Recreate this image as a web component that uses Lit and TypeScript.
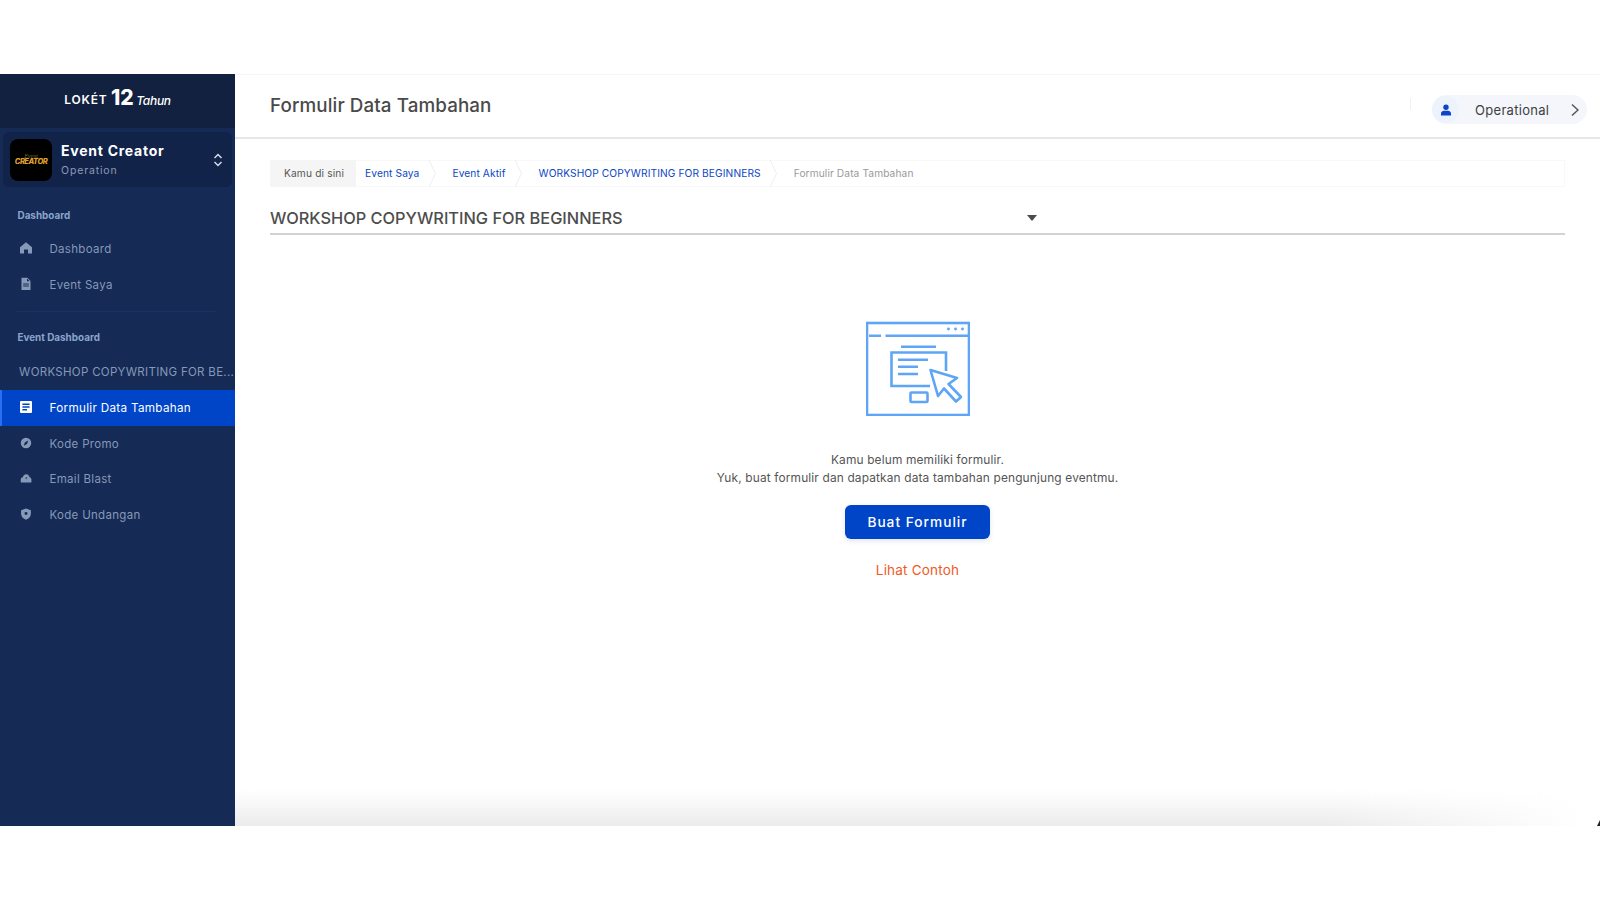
import { LitElement, html, css } from 'lit';
import { customElement } from 'lit/decorators.js';

const icons = {
  home: html`<svg viewBox="0 0 14 14"><path d="M7 1.2 13 6.2V12.6H9V8.6H5V12.6H1V6.2Z" fill="currentColor"/></svg>`,
  doc: html`<svg viewBox="0 0 14 14"><path fill-rule="evenodd" d="M2.5 .8H8.4L11.5 3.9V13H2.5ZM4.2 6.4V7.4H9.8V6.4ZM4.2 8.6V9.6H9.8V8.6ZM8 1.6V4.3H10.7Z" fill="currentColor"/></svg>`,
  form: html`<svg viewBox="0 0 14 14"><path fill-rule="evenodd" d="M2 1H12A1 1 0 0 1 13 2V12A1 1 0 0 1 12 13H2A1 1 0 0 1 1 12V2A1 1 0 0 1 2 1ZM3.4 3.6V5H10.6V3.6ZM3.4 6.3V7.7H10.6V6.3ZM3.4 9V10.4H8V9Z" fill="currentColor"/></svg>`,
  promo: html`<svg viewBox="-1 -1 16 16"><path fill-rule="evenodd" d="M7 1A6 6 0 1 1 7 13 6 6 0 0 1 7 1ZM9.6 4 5.8 6 4.4 10 8.2 8Z" fill="currentColor"/></svg>`,
  blast: html`<svg viewBox="-1 -1 16 16"><path d="M1 12V8.6C1 7.2 2.4 6.2 3.4 6.2 3.8 4 5.6 2.8 7.3 2.8 9.4 2.8 10.8 4.4 11 6.1 12.3 6.3 13.2 7.4 13.2 8.6V12ZM6.2 7 7.2 8.4 8.6 5.6Z" fill="currentColor"/></svg>`,
  shield: html`<svg viewBox="-1 -1 16 16"><path fill-rule="evenodd" d="M7 .6 12.6 2.6V6.6C12.6 9.8 10.2 12.4 7 13.6 3.8 12.4 1.4 9.8 1.4 6.6V2.6ZM7 4.8A1.7 1.7 0 1 0 7 8.2 1.7 1.7 0 0 0 7 4.8Z" fill="currentColor"/></svg>`,
};

@customElement('app-root')
export class AppRoot extends LitElement {
  static styles = css`
    :host {
      display: block;
      height: 900px;
      padding-top: 74px;
      box-sizing: border-box;
      background: #fff;
      font-family: Inter, "Noto Sans", sans-serif;
      overflow: hidden;
    }
    .frame {
      display: flex;
      height: 752px;
      position: relative;
    }

    /* sidebar */
    .side {
      width: 235px;
      flex: none;
      background: #152a55;
      color: #8599b8;
      display: flex;
      flex-direction: column;
    }
    .logo {
      height: 54px;
      padding-bottom: 4px;
      box-sizing: border-box;
      background: #12213f;
      color: #fff;
      display: flex;
      align-items: center;
      justify-content: center;
      gap: 2.5px;
    }
    .logo .l1 { font-size: 12px; font-weight: 600; letter-spacing: .8px; margin-right: 1px; }
    .logo .l2 { font-size: 21px; font-weight: 800; line-height: 1; margin-top: -4px; }
    .logo .l3 { font-size: 12px; font-style: italic; font-weight: 500; letter-spacing: -.3px; margin-top: 3px; }
    .card {
      margin: 4px 3px 0;
      height: 55px;
      border-radius: 6px;
      background: #12234a;
      display: flex;
      align-items: center;
      padding: 0 7px;
      box-sizing: border-box;
    }
    .avatar {
      width: 42px;
      height: 42px;
      border-radius: 8px;
      background: #000;
      color: #e0a02c;
      flex: none;
      display: flex;
      flex-direction: column;
      align-items: center;
      justify-content: center;
      line-height: 1;
    }
    .avatar .a1 { font-family: "Liberation Serif", serif; font-style: italic; font-size: 6px; color: #8a6420; }
    .avatar .a2 { font-size: 7.5px; font-weight: 800; font-style: italic; letter-spacing: -.5px; margin-top: -1px; }
    .who { margin-left: 9px; flex: 1; }
    .who .name { color: #fff; font-size: 14px; font-weight: 700; letter-spacing: .75px; line-height: 17px; }
    .who .role { font-size: 10.5px; letter-spacing: .85px; line-height: 15px; margin-top: 4px; color: #8a9ab5; }
    .updown { width: 10px; height: 16px; color: #d5dbe6; margin-right: 2px; }
    .label {
      font-size: 9.9px;
      font-weight: 700;
      color: #8aa5cb;
      padding-left: 17.5px;
      line-height: 14px;
    }
    .label.first { margin-top: 21px; margin-bottom: 9.5px; }
    .label.second { margin-top: 18.5px; margin-bottom: 9px; }
    .item {
      height: 35.7px;
      display: flex;
      align-items: center;
      font-size: 11.5px;
      letter-spacing: .3px;
      padding-left: 19px;
    }
    .item svg { width: 14px; height: 14px; margin-right: 16.5px; flex: none; margin-top: -2px; }
    .item.event {
      height: 36.7px;
      white-space: nowrap;
      font-size: 11.5px;
      letter-spacing: .3px;
    }
    .item.active {
      background: #0045c8;
      color: #fff;
      font-size: 11.7px;
      border-left: 2px solid #2a6ff0;
      padding-left: 17px;
    }
    .divider {
      height: 1px;
      background: #1c3260;
      margin: 8px 19px 0 17px;
    }

    /* main */
    .main { flex: 1; min-width: 0; display: flex; flex-direction: column; position: relative; }
    .top {
      height: 65px;
      flex: none;
      box-sizing: border-box;
      border-top: 1px solid #f6f6f6;
      border-bottom: 2px solid #e6e6e6;
      display: flex;
      align-items: center;
      padding: 0 13px 0 35px;
    }
    .top h1 {
      flex: 1;
      margin: 0 0 2px;
      font-size: 18.8px;
      font-weight: 500;
      color: #4a4a4a;
      letter-spacing: .1px;
    }
    .tick { width: 1px; height: 12px; background: #eef2f8; margin: 0 21px 4px 0; }
    .pill {
      width: 155px;
      height: 29px;
      border-radius: 15px;
      background: #f4f6fb;
      display: flex;
      align-items: center;
      box-sizing: border-box;
      color: #3e3e3e;
      font-size: 13px;
      letter-spacing: .3px;
      margin-top: 7px;
    }
    .pill .circle {
      width: 27px;
      height: 27px;
      border-radius: 50%;
      background: #ecf3fd;
      display: flex;
      align-items: center;
      justify-content: center;
      color: #0b46c6;
      margin-right: 16px;
      flex: none;
    }
    .pill .circle svg { width: 12px; height: 12px; }
    .pill .chev { width: 8px; height: 14px; margin-left: 22px; color: #555; }

    .content { padding: 21px 35px 0; flex: 1; display: flex; flex-direction: column; }
    .crumbs {
      height: 27px;
      display: flex;
      align-items: center;
      font-size: 10.2px;
      letter-spacing: .1px;
      color: #0b46c6;
      border: 1px solid #f8f8f8;
      border-left: 0;
      box-sizing: border-box;
    }
    .crumbs .here {
      height: 27px;
      box-sizing: border-box;
      background: #f5f5f5;
      color: #555;
      padding: 0 12px 2px 14px;
      display: flex;
      align-items: center;
      letter-spacing: .15px;
    }
    .crumbs a { padding: 0 9.5px 2px 16.5px; white-space: nowrap; }
    .crumbs a.lead { padding-left: 9px; }
    .crumbs .cur { color: #9a9a9a; }
    .crumbs svg { width: 7px; height: 27px; flex: none; color: #eeeeee; }
    .select {
      height: 48px;
      box-sizing: border-box;
      border-bottom: 2px solid #d2d2d2;
      display: flex;
      align-items: center;
    }
    .select .in {
      width: 767px;
      display: flex;
      align-items: center;
      justify-content: space-between;
      padding-top: 15px;
    }
    .select span { font-size: 16.35px; font-weight: 500; color: #4d4d4d; }
    .select svg { width: 10px; height: 6px; color: #4a4a4a; }

    .empty {
      display: flex;
      flex-direction: column;
      align-items: center;
      padding-top: 86px;
      color: #555;
    }
    .empty .art { width: 104px; height: 95px; display: block; }
    .empty p {
      margin: 35px 0 0;
      text-align: center;
      font-size: 11.9px;
      letter-spacing: .15px;
      line-height: 18.4px;
    }
    .btn {
      margin-top: 17px;
      width: 145px;
      height: 34px;
      border: none;
      border-radius: 6px;
      background: #0045c8;
      color: #fff;
      font: inherit;
      font-size: 13.7px;
      font-weight: 500;
      letter-spacing: 1px;
      box-shadow: 0 2px 5px rgba(0, 40, 120, .12);
    }
    .more { margin-top: 22px; font-size: 13.5px; line-height: 18px; color: #f0591f; letter-spacing: .2px; }

    .fade {
      position: absolute;
      left: 0;
      right: 0;
      bottom: 0;
      height: 36px;
      background: linear-gradient(to bottom, rgba(238,238,238,0), rgba(232,232,232,.85));
      -webkit-mask-image: linear-gradient(to right, #000 80%, transparent 99%);
      mask-image: linear-gradient(to right, #000 80%, transparent 99%);
    }
    .corner {
      position: absolute;
      right: 0;
      bottom: 0;
      width: 3px;
      height: 6px;
      background: #222;
      clip-path: polygon(100% 0, 100% 100%, 0 100%);
    }
  `;

  render() {
    return html`
      <div class="frame">
        <aside class="side">
          <div class="logo">
            <span class="l1">LOKÉT</span><span class="l2">12</span><span class="l3">Tahun</span>
          </div>
          <div class="card">
            <div class="avatar"><span class="a1">Event</span><span class="a2">CREATOR</span></div>
            <div class="who">
              <div class="name">Event Creator</div>
              <div class="role">Operation</div>
            </div>
            <svg class="updown" viewBox="0 0 10 16" fill="none" stroke="currentColor" stroke-width="1.5">
              <path d="M1.5 6 5 2.5 8.5 6M1.5 10 5 13.5 8.5 10"/>
            </svg>
          </div>
          <div class="label first">Dashboard</div>
          <div class="item">${icons.home}Dashboard</div>
          <div class="item">${icons.doc}Event Saya</div>
          <div class="divider"></div>
          <div class="label second">Event Dashboard</div>
          <div class="item event">WORKSHOP COPYWRITING FOR BE...</div>
          <div class="item active">${icons.form}Formulir Data Tambahan</div>
          <div class="item">${icons.promo}Kode Promo</div>
          <div class="item">${icons.blast}Email Blast</div>
          <div class="item">${icons.shield}Kode Undangan</div>
        </aside>
        <main class="main">
          <header class="top">
            <h1>Formulir Data Tambahan</h1>
            <div class="tick"></div>
            <div class="pill">
              <span class="circle">
                <svg viewBox="0 0 12 12" fill="currentColor"><circle cx="6" cy="3.2" r="2.7"/><path d="M1 11.5V9.6C1 7.8 2.6 6.8 4 6.8H8C9.4 6.8 11 7.8 11 9.6V11.5Z"/></svg>
              </span>
              Operational
              <svg class="chev" viewBox="0 0 8 14" fill="none" stroke="currentColor" stroke-width="1.5"><path d="M1 1.5 7 7 1 12.5"/></svg>
            </div>
          </header>
          <section class="content">
            <nav class="crumbs">
              <span class="here">Kamu di sini</span>
              <a class="lead">Event Saya</a>${this.chevron()}
              <a>Event Aktif</a>${this.chevron()}
              <a>WORKSHOP COPYWRITING FOR BEGINNERS</a>${this.chevron()}
              <a class="cur">Formulir Data Tambahan</a>
            </nav>
            <div class="select">
              <div class="in">
                <span>WORKSHOP COPYWRITING FOR BEGINNERS</span>
                <svg viewBox="0 0 10 6" fill="currentColor"><path d="M0 0H10L5 6Z"/></svg>
              </div>
            </div>
            <div class="empty">
              <svg class="art" viewBox="865 322 104 95" fill="none" stroke="#5ea5f5" stroke-width="2.6">
                <rect x="866" y="324" width="102" height="92"/>
                <path d="M868 336.7H880M884.5 336.7H967"/>
                <path d="M900 347.7H935"/>
                <path d="M929 387H890.5V353.5H945V372"/>
                <path d="M897 360.7H927M897 367.7H917M897 375H917"/>
                <rect x="909.5" y="393.5" width="17" height="9.5" rx="1"/>
                <path d="M929.5 371 956 379 947.5 385 960 398 955 402.5 943 389.5 937 397Z" stroke-linejoin="round"/>
                <g fill="#5ea5f5" stroke="none"><circle cx="947.5" cy="330" r="1.4"/><circle cx="954.5" cy="330" r="1.4"/><circle cx="961.5" cy="330" r="1.4"/></g>
              </svg>
              <p>Kamu belum memiliki formulir.<br />Yuk, buat formulir dan dapatkan data tambahan pengunjung eventmu.</p>
              <button class="btn">Buat Formulir</button>
              <div class="more">Lihat Contoh</div>
            </div>
          </section>
          <div class="fade"></div>
          <div class="corner"></div>
        </main>
      </div>
    `;
  }

  private chevron() {
    return html`<svg viewBox="0 0 7 27" fill="none" stroke="currentColor"><path d="M0 0 6.5 13.5 0 27"/></svg>`;
  }
}
